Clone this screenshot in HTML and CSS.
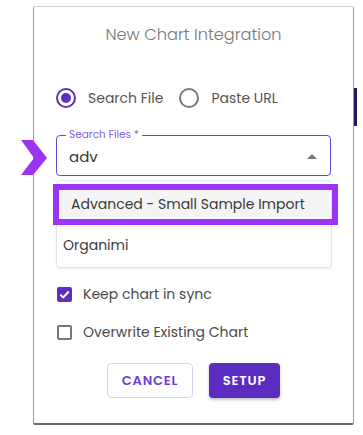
FILE: index.html
```html
<!DOCTYPE html>
<html>
<head>
<meta charset="utf-8">
<link rel="stylesheet" href="styles.css">
</head>
<body>
<div class="page">
  <div class="bg-strip"></div>
  <div class="dialog">
    <div class="title">New Chart Integration</div>
    <div class="radios">
      <label class="radio-item"><span class="radio checked"><span class="dot"></span></span><span>Search File</span></label>
      <label class="radio-item"><span class="radio"></span><span>Paste URL</span></label>
    </div>
    <div class="field">
      <span class="field-label">Search Files *</span>
      <span class="field-value">adv</span>
      <span class="caret"></span>
    </div>
    <div class="options">
      <div class="option first">Advanced - Small Sample Import</div>
      <div class="option second">Organimi</div>
    </div>
    <div class="checks">
      <div class="check-item"><span class="box checked"><svg viewBox="0 0 16 16" width="15" height="15"><path d="M3.5 8.2 L6.6 11.2 L12.6 4.8" fill="none" stroke="#fff" stroke-width="2"/></svg></span><span>Keep chart in sync</span></div>
      <div class="check-item"><span class="box"></span><span>Overwrite Existing Chart</span></div>
    </div>
    <div class="actions">
      <button class="btn cancel">CANCEL</button>
      <button class="btn setup">SETUP</button>
    </div>
  </div>
  <div class="highlight"></div>
  <svg class="chevron" width="28" height="36" viewBox="0 0 28 36"><polygon points="1,0 13,0 27,18 13,35 1,35 14,18" fill="#9b35f4"/></svg>
</div>
</body>
</html>
```
FILE: styles.css
```css
* { box-sizing: border-box; }
body { margin: 0; background: #fff; font-family: "Poppins", "Inter", "Noto Sans", sans-serif; }
.page { position: relative; width: 363px; height: 435px; overflow: hidden; }
.bg-strip { position: absolute; left: 354px; top: 88px; width: 3px; height: 38px; background: #1d1b5c; }
.dialog {
  position: relative;
  margin: 6px 0 0 33px;
  width: 321px;
  height: 419px;
  background: #fff;
  border: 1px solid #9a9a9a;
  border-top-color: #d0d0d0;
  border-bottom: 2px solid #6a6a6a;
  border-radius: 2px;
  padding: 0 22px;
}
.title { text-align: center; margin-top: 13px; line-height: 30px; font-size: 16.2px; font-weight: 300; color: #777; }
.radios { display: flex; align-items: center; margin-top: 36px; height: 24px; font-size: 14px; color: #555; }
.radio-item { display: flex; align-items: center; gap: 12px; margin-right: 16px; }
.radio { width: 20px; height: 20px; border-radius: 50%; border: 2px solid #7a7a7a; display: flex; align-items: center; justify-content: center; }
.radio.checked { border-color: #5f2fc4; }
.dot { width: 10px; height: 10px; border-radius: 50%; background: #5f2fc4; }
.field {
  position: relative;
  margin-top: 25px;
  height: 41px;
  border: 1.5px solid #6b44d4;
  border-radius: 4px;
  display: flex;
  align-items: center;
  padding-left: 12px;
}
.field-label { position: absolute; left: 9px; top: -8px; background: #fff; padding: 0 3px; font-size: 10.5px; line-height: 14px; color: #8b5fe3; }
.field-value { font-size: 15px; color: #333; margin-top: 2px; }
.caret { position: absolute; right: 13px; top: 18px; width: 0; height: 0; border-left: 5px solid transparent; border-right: 5px solid transparent; border-bottom: 5px solid #777; }
.options {
  margin-top: 4px;
  width: 276px;
  height: 88px;
  border: 1px solid #e4e4e4;
  border-radius: 4px;
  box-shadow: 0 1px 2px rgba(0,0,0,0.08);
  padding-top: 3px;
}
.option { height: 41px; display: flex; align-items: center; font-size: 14px; color: #3a3a3a; }
.option.first { background: #f4f4f4; padding-left: 14px; }
.option.second { padding-left: 6px; height: 40px; }
.checks { margin-top: 14px; }
.check-item { display: flex; align-items: center; gap: 11px; height: 24px; font-size: 14px; color: #4a4a4a; margin-bottom: 14px; padding-left: 1px; }
.check-item:last-child { margin-bottom: 0; }
.box { width: 15px; height: 15px; border: 2px solid #777; border-radius: 2px; display: flex; }
.box.checked { background: #5f2fc4; border-color: #5f2fc4; padding: 0; }
.box.checked svg { margin: -2px; }
.actions { display: flex; justify-content: center; gap: 16px; margin-top: 19px; }
.btn { height: 35px; font-family: inherit; font-size: 13px; font-weight: 600; letter-spacing: 0.8px; border-radius: 4px; cursor: pointer; }
.cancel { width: 86px; background: #fff; color: #6a3fd0; border: 1px solid #dcd0f6; }
.setup { width: 71px; background: #5a2dc0; color: #fff; border: none; box-shadow: 0 2px 3px rgba(0,0,0,0.25); }
.highlight { position: absolute; left: 53px; top: 184px; width: 285px; height: 41px; border: 6px solid #9b35f4; }
.chevron { position: absolute; left: 20px; top: 140px; }
```
